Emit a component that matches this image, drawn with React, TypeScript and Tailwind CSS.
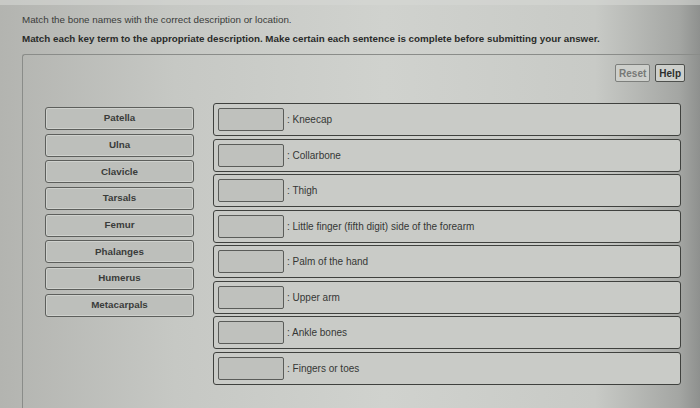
import React from 'react';

const terms = ['Patella', 'Ulna', 'Clavicle', 'Tarsals', 'Femur', 'Phalanges', 'Humerus', 'Metacarpals'];

const descriptions = [
  'Kneecap',
  'Collarbone',
  'Thigh',
  'Little finger (fifth digit) side of the forearm',
  'Palm of the hand',
  'Upper arm',
  'Ankle bones',
  'Fingers or toes',
];

export default function App() {
  return (
    <div
      className="w-[700px] h-[408px] overflow-hidden text-[#2e302e] bg-[linear-gradient(90deg,#b3b4b0_0%,#c6c8c4_25%,#d0d2ce_55%,#c8cac6_85%,#a4a6a3_97%,#8e908e_100%)]"
      style={{ fontFamily: '"Liberation Sans", Arial, sans-serif' }}
    >
      <div className="h-[5px] bg-[#d6d7d4]/60" />
      <div className="pl-[22px] pt-[9px]">
        <p className="text-[9.8px] leading-[11px] text-[#3a3c3a]">
          Match the bone names with the correct description or location.
        </p>
        <p className="mt-[8px] text-[9.8px] leading-[11px] font-bold text-[#2a2c2a]">
          Match each key term to the appropriate description. Make certain each sentence is complete before submitting your answer.
        </p>
      </div>

      <div className="ml-[22px] mt-[10px] h-[360px] border-l border-t border-[#8a8c89] rounded-tl-[3px]">
        <div className="flex justify-end gap-[5px] pr-[15px] pt-[9px]">
          <button className="h-[18px] px-[3px] border border-[#7d7f7c] rounded-[2px] text-[10px] font-bold text-[#777976] bg-[#cdcfcb]">
            Reset
          </button>
          <button className="h-[18px] px-[3px] border border-[#4e504d] rounded-[2px] text-[10px] font-bold text-[#2c2e2c] bg-[#cdcfcb]">
            Help
          </button>
        </div>

        <div className="flex gap-[19px] pl-[22px] mt-[21px]">
          <div className="w-[149px] flex flex-col gap-[3.7px] pt-[4px]">
            {terms.map(t => (
              <div
                key={t}
                className="h-[23px] flex items-center justify-center border border-[#5d5f5c] rounded-[3px] bg-[#bdbfbb] text-[9.8px] font-bold text-[#3a3c3a] shadow-[inset_0_0_0_1px_#cfd1cd]"
              >
                {t}
              </div>
            ))}
          </div>

          <div className="w-[468px] flex flex-col gap-[2.57px]">
            {descriptions.map(d => (
              <div
                key={d}
                className="h-[33px] flex items-center gap-[3px] pl-[4px] border-[1.5px] border-[#3f413e] rounded-[3px] bg-[#c9cbc7]"
              >
                <div className="w-[66px] h-[23px] border-[1.5px] border-[#5a5c59] rounded-[2px] bg-[#bfc1bd]" />
                <span className="text-[10px] text-[#353735]">: {d}</span>
              </div>
            ))}
          </div>
        </div>
      </div>
    </div>
  );
}
